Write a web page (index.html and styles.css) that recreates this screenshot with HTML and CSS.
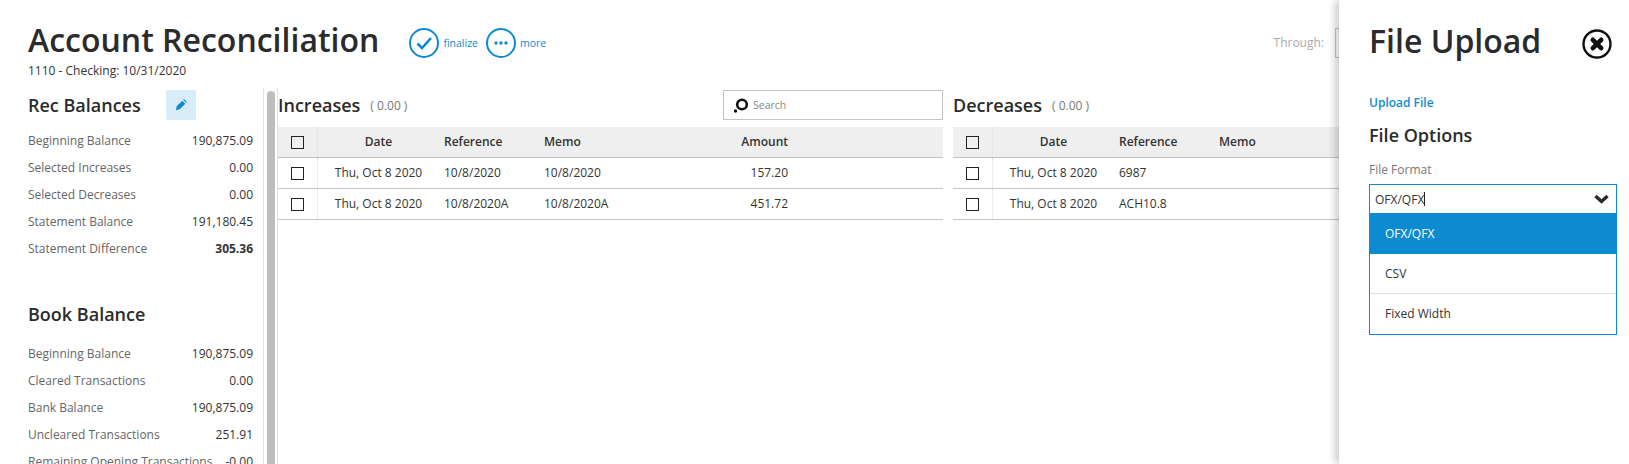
FILE: index.html
```html
<!DOCTYPE html>
<html lang="en">
<head>
    <meta charset="UTF-8">
    <meta name="viewport" content="width=device-width, initial-scale=1.0">
    <title>Account Reconciliation</title>
    <link rel="stylesheet" href="styles.css">
</head>
<body>
<div class="page">

    <!-- Page header -->
    <div class="page-head">
        <div class="title-block">
            <h1>Account Reconciliation</h1>
            <div class="subtitle">1110 - Checking: 10/31/2020</div>
        </div>
        <div class="actions">
            <a class="action">
                <svg width="30" height="30" viewBox="0 0 30 30"><circle cx="15" cy="15" r="14" fill="none" stroke="#0d8bd0" stroke-width="2"/><path d="M8.500 15.500l4.500 4.500 9-10" fill="none" stroke="#0d8bd0" stroke-width="2.600"/></svg>
                <span>finalize</span>
            </a>
            <a class="action">
                <svg width="30" height="30" viewBox="0 0 30 30"><circle cx="15" cy="15" r="14" fill="none" stroke="#0d8bd0" stroke-width="2"/><circle cx="10" cy="15" r="1.700" fill="#0d8bd0"/><circle cx="15" cy="15" r="1.700" fill="#0d8bd0"/><circle cx="20" cy="15" r="1.700" fill="#0d8bd0"/></svg>
                <span>more</span>
            </a>
        </div>
        <div class="through">
            <span>Through:</span>
            <div class="through-box"></div>
        </div>
    </div>

    <div class="content">

        <!-- Balances column -->
        <div class="balances">
            <div class="balance-head">
                <h2>Rec Balances</h2>
                <button class="edit-btn">
                    <svg width="12" height="12" viewBox="0 0 14 14"><path d="M1 13l1-4.500 6.500-6.500 3.500 3.500-6.500 6.500zM9.500 1l1-1 3.500 3.500-1 1z" fill="#0d8bd0"/></svg>
                </button>
            </div>
            <div class="balance-row"><span>Beginning Balance</span><span class="val">190,875.09</span></div>
            <div class="balance-row"><span>Selected Increases</span><span class="val">0.00</span></div>
            <div class="balance-row"><span>Selected Decreases</span><span class="val">0.00</span></div>
            <div class="balance-row"><span>Statement Balance</span><span class="val">191,180.45</span></div>
            <div class="balance-row"><span>Statement Difference</span><span class="val total">305.36</span></div>

            <div class="balance-head book-head">
                <h2>Book Balance</h2>
            </div>
            <div class="balance-row"><span>Beginning Balance</span><span class="val">190,875.09</span></div>
            <div class="balance-row"><span>Cleared Transactions</span><span class="val">0.00</span></div>
            <div class="balance-row"><span>Bank Balance</span><span class="val">190,875.09</span></div>
            <div class="balance-row"><span>Uncleared Transactions</span><span class="val">251.91</span></div>
            <div class="balance-row"><span>Remaining Opening Transactions</span><span class="val">-0.00</span></div>
        </div>

        <div class="scroll-track"><div class="scroll-thumb"></div></div>

        <!-- Increases -->
        <div class="rec-section increases">
            <div class="section-head">
                <h2>Increases</h2>
                <span class="section-total">( 0.00 )</span>
                <div class="search">
                    <svg width="16" height="16" viewBox="0 0 16 16"><circle cx="9" cy="7.500" r="4.800" fill="none" stroke="#111" stroke-width="2.600"/><circle cx="2.500" cy="14" r="1.700" fill="#111"/></svg>
                    <span>Search</span>
                </div>
            </div>
            <div class="rec-row rec-header">
                <div class="check-cell"><span class="checkbox"></span></div>
                <div class="date-cell">Date</div>
                <div>Reference</div>
                <div>Memo</div>
                <div class="amount-cell">Amount</div>
            </div>
            <div class="rec-row">
                <div class="check-cell"><span class="checkbox"></span></div>
                <div class="date-cell">Thu, Oct 8 2020</div>
                <div>10/8/2020</div>
                <div>10/8/2020</div>
                <div class="amount-cell">157.20</div>
            </div>
            <div class="rec-row">
                <div class="check-cell"><span class="checkbox"></span></div>
                <div class="date-cell">Thu, Oct 8 2020</div>
                <div>10/8/2020A</div>
                <div>10/8/2020A</div>
                <div class="amount-cell">451.72</div>
            </div>
        </div>

        <!-- Decreases -->
        <div class="rec-section decreases">
            <div class="section-head">
                <h2>Decreases</h2>
                <span class="section-total">( 0.00 )</span>
            </div>
            <div class="rec-row rec-header">
                <div class="check-cell"><span class="checkbox"></span></div>
                <div class="date-cell">Date</div>
                <div>Reference</div>
                <div>Memo</div>
                <div class="amount-cell"></div>
            </div>
            <div class="rec-row">
                <div class="check-cell"><span class="checkbox"></span></div>
                <div class="date-cell">Thu, Oct 8 2020</div>
                <div>6987</div>
                <div></div>
                <div class="amount-cell"></div>
            </div>
            <div class="rec-row">
                <div class="check-cell"><span class="checkbox"></span></div>
                <div class="date-cell">Thu, Oct 8 2020</div>
                <div>ACH10.8</div>
                <div></div>
                <div class="amount-cell"></div>
            </div>
        </div>
    </div>

    <!-- File upload side panel -->
    <div class="upload-panel">
        <div class="panel-head">
            <h1>File Upload</h1>
            <svg class="panel-close" width="30" height="30" viewBox="0 0 30 30"><circle cx="15" cy="15" r="13.500" fill="none" stroke="#111" stroke-width="2.400"/><path d="M10.800 10.800l8.400 8.400M19.200 10.800l-8.400 8.400" stroke="#111" stroke-width="4.600" stroke-linecap="round"/></svg>
        </div>
        <a class="upload-link">Upload File</a>
        <h3>File Options</h3>
        <div class="field-label">File Format</div>
        <div class="format-select">
            <div class="format-input">
                <span>OFX/QFX</span><span class="caret"></span>
                <svg class="chevron" width="15" height="10" viewBox="0 0 15 10"><path d="M1.500 2l6 5.500 6-5.500" fill="none" stroke="#2b2b2b" stroke-width="3.400"/></svg>
            </div>
            <div class="format-option selected">OFX/QFX</div>
            <div class="format-option csv-option">CSV</div>
            <div class="format-option">Fixed Width</div>
        </div>
    </div>
</div>
</body>
</html>
```

FILE: styles.css
```css
/* Base */
body {
    margin: 0;
    font-family: "Open Sans", sans-serif;
    font-size: 12px;
    color: #333;
    background-color: #fff;
}

h1, h2, h3 {
    margin: 0;
    font-weight: 600;
    color: #2b2b2b;
}

.page {
    position: relative;
    width: 1629px;
    height: 464px;
    overflow: hidden;
}

/* Page header */
.page-head {
    display: flex;
    height: 88px;
    padding-left: 28px;
    box-sizing: border-box;
}

.title-block {
    padding-top: 16px;
}

.title-block h1 {
    font-size: 32px;
    line-height: 48px;
}

.subtitle {
    font-size: 12px;
    line-height: 18px;
    margin-top: -2px;
}

.actions {
    display: flex;
    gap: 8px;
    margin-left: 30px;
    padding-top: 28px;
}

.action {
    display: flex;
    align-items: center;
    gap: 4px;
    height: 30px;
    color: #0d8bd0;
    font-size: 10.500px;
}

.through {
    display: flex;
    gap: 11px;
    margin-left: auto;
    padding-top: 28px;
    color: #aaa;
    font-size: 12px;
    line-height: 30px;
}

.through-box {
    width: 294px;
    height: 30px;
    box-sizing: border-box;
    border: 1px solid #c4c4c4;
}

/* Main area */
.content {
    display: flex;
}

.balances {
    width: 263px;
    flex-shrink: 0;
    box-sizing: border-box;
    padding: 0 10px 0 28px;
}

.balance-head {
    display: flex;
    align-items: center;
    justify-content: space-between;
    height: 34px;
    padding-bottom: 5px;
}

.balance-head h2 {
    font-size: 18px;
}

.edit-btn {
    display: flex;
    align-items: center;
    justify-content: center;
    width: 30px;
    height: 30px;
    margin-right: 57px;
    padding: 0;
    border: none;
    border-radius: 2px;
    background-color: #d9edf8;
}

.book-head {
    margin-top: 35px;
    padding-bottom: 9px;
}

.balance-row {
    display: flex;
    justify-content: space-between;
    height: 27px;
    line-height: 27px;
    color: #666;
    white-space: nowrap;
}

.val {
    color: #333;
}

.val.total {
    font-weight: 700;
}

.scroll-track {
    width: 15px;
    height: 376px;
    flex-shrink: 0;
    box-sizing: border-box;
    padding: 3px 3px 0 3px;
    border-left: 1px solid #e2e2e2;
    border-right: 1px solid #e2e2e2;
}

.scroll-thumb {
    width: 8px;
    height: 100%;
    border-radius: 4px 4px 0 0;
    background-color: #bdbdbd;
}

/* Increases and decreases */
.rec-section {
    flex-shrink: 0;
}

.increases {
    width: 665px;
    margin-right: 10px;
}

.decreases {
    width: 640px;
}

.section-head {
    display: flex;
    align-items: center;
    height: 34px;
    padding-bottom: 5px;
}

.section-head h2 {
    font-size: 18px;
}

.section-total {
    margin-left: 10px;
    color: #777;
}

.search {
    display: flex;
    align-items: center;
    gap: 4px;
    width: 220px;
    height: 30px;
    box-sizing: border-box;
    margin-left: auto;
    padding-left: 9px;
    border: 1px solid #c4c4c4;
    color: #888;
    font-size: 10.500px;
}

.rec-row {
    display: grid;
    grid-template-columns: 40px 126px 100px 144px 100px 1fr;
    height: 31px;
    box-sizing: border-box;
    border-bottom: 1px solid #c4c4c4;
    line-height: 30px;
}

.rec-header {
    background-color: #efefef;
    font-weight: 600;
}

.check-cell {
    display: flex;
    align-items: center;
    justify-content: center;
    border-right: 1px dotted #ddd;
}

.checkbox {
    width: 11px;
    height: 11px;
    border: 1px solid #222;
}

.date-cell {
    padding-right: 5px;
    text-align: center;
}

.amount-cell {
    text-align: right;
}

/* File upload panel */
.upload-panel {
    position: absolute;
    top: 0;
    right: 0;
    bottom: 0;
    width: 290px;
    box-sizing: border-box;
    padding-left: 30px;
    background-color: #fff;
    box-shadow: -4px 0 8px rgba(0, 0, 0, 0.2);
}

.panel-head {
    display: flex;
    justify-content: space-between;
    align-items: center;
    width: 260px;
    height: 73px;
    padding-top: 8px;
    box-sizing: border-box;
}

.panel-head h1 {
    font-size: 32px;
    line-height: 48px;
}

.panel-close {
    margin-right: 17px;
    margin-top: 6px;
}

.upload-link {
    display: block;
    margin-top: 21px;
    color: #0d8bd0;
    font-weight: 600;
    line-height: 18px;
}

.upload-panel h3 {
    margin-top: 10px;
    font-size: 18px;
    line-height: 26px;
}

.field-label {
    margin-top: 13px;
    color: #777;
    line-height: 18px;
}

.format-select {
    width: 248px;
    margin-top: 5px;
    box-sizing: border-box;
    border: 1px solid #0d8bd0;
}

.format-input {
    display: flex;
    align-items: center;
    height: 28px;
    padding-left: 5px;
}

.caret {
    width: 1px;
    height: 14px;
    background-color: #222;
}

.chevron {
    margin-left: auto;
    margin-right: 7px;
}

.format-option {
    height: 40px;
    padding-left: 15px;
    line-height: 40px;
}

.csv-option {
    height: 39px;
    border-bottom: 1px solid #e2e2e2;
    line-height: 39px;
}

.format-option.selected {
    height: 41px;
    background-color: #0d8bd0;
    color: #fff;
    font-weight: 500;
    line-height: 41px;
}
```
